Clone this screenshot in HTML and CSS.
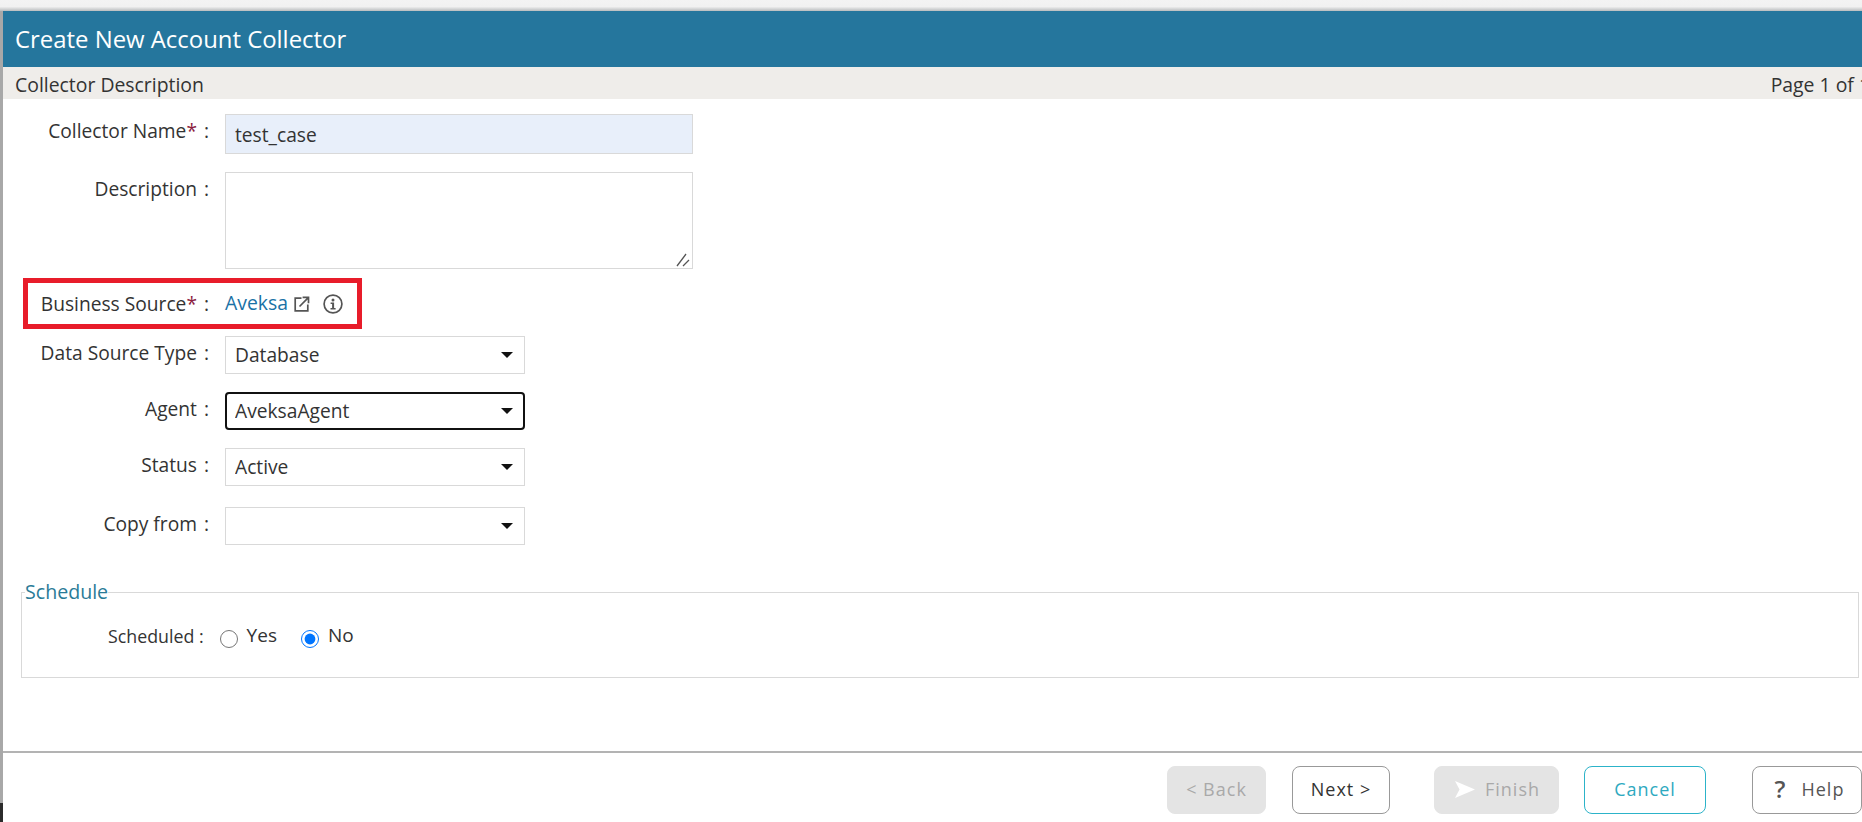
FILE: index.html
```html
<!DOCTYPE html>
<html lang="en">
<head>
<meta charset="utf-8">
<title>Create New Account Collector</title>
<link rel="stylesheet" href="styles.css">
</head>
<body>
<div class="page">
  <div class="top-strip"></div>
  <div class="window">
    <h1 class="title">Create New Account Collector</h1>
    <div class="subbar"><span>Collector Description</span><span>Page 1 of 1</span></div>
    <form class="form">
      <div class="row row-name">
        <label class="label">Collector Name<em>*</em><span class="colon">:</span></label>
        <input class="field text-field filled" type="text" value="test_case">
      </div>
      <div class="row row-desc">
        <label class="label">Description<span class="colon">:</span></label>
        <div class="area-wrap">
          <textarea class="field area"></textarea>
          <svg class="grip" viewBox="0 0 14 14" fill="none" stroke="#555" stroke-width="1.300"><path d="M1 13L10 1M7 13L13 7"/></svg>
        </div>
      </div>
      <div class="row highlight">
        <label class="label">Business Source<em>*</em><span class="colon">:</span></label>
        <div class="source">
          <a class="link">Aveksa</a>
          <svg class="ext" viewBox="0 0 16 16" fill="none" stroke="#555" stroke-width="1.700"><path d="M7.500 2.200H1.200v12.600h12.600V8.500"/><path d="M5.500 10.500L14.300 1.700M8.600 1.400h5.900v5.900"/></svg>
          <svg class="info" viewBox="0 0 20 20" fill="none"><circle cx="10" cy="10" r="8.900" stroke="#555" stroke-width="1.700"/><circle cx="10" cy="5.900" r="1.500" fill="#555"/><path d="M7.600 8.600H11.100v5.400h1.500v1.500H7.500V14h1.600v-3.900H7.600z" fill="#555"/></svg>
        </div>
      </div>
      <div class="row row-select">
        <label class="label">Data Source Type<span class="colon">:</span></label>
        <div class="select-wrap"><select class="field select"><option>Database</option></select></div>
      </div>
      <div class="row row-select">
        <label class="label">Agent<span class="colon">:</span></label>
        <div class="select-wrap"><select class="field select focused"><option>AveksaAgent</option></select></div>
      </div>
      <div class="row row-select">
        <label class="label">Status<span class="colon">:</span></label>
        <div class="select-wrap"><select class="field select"><option>Active</option></select></div>
      </div>
      <div class="row row-copy">
        <label class="label">Copy from<span class="colon">:</span></label>
        <div class="select-wrap"><select class="field select"><option></option></select></div>
      </div>
      <fieldset class="schedule">
        <legend>Schedule</legend>
        <div class="sched-row">
          <span class="sched-label">Scheduled :</span>
          <label class="radio"><input type="radio" name="sched"><span>Yes</span></label>
          <label class="radio"><input type="radio" name="sched" checked><span>No</span></label>
        </div>
      </fieldset>
    </form>
    <div class="footer">
      <button type="button" class="btn disabled back">&lt; Back</button>
      <button type="button" class="btn next">Next &gt;</button>
      <button type="button" class="btn disabled finish"><svg class="plane" viewBox="0 0 20 17"><path d="M0 0L20 8.500L0 17L4.500 8.500z" fill="#fff"/></svg>Finish</button>
      <button type="button" class="btn cancel">Cancel</button>
      <button type="button" class="btn help"><span class="q">?</span>Help</button>
    </div>
  </div>
  <div class="corner"></div>
</div>
</body>
</html>
```

FILE: styles.css
```css
* { box-sizing: border-box; }
html, body { margin: 0; height: 100%; overflow: hidden; }
body { font-family: "Open Sans", "Liberation Sans", sans-serif; font-size: 19.2px; color: #333; background: #fff; }
.page { position: relative; width: 1862px; height: 822px; display: flex; flex-direction: column; overflow: hidden; }
.top-strip { height: 11px; background: linear-gradient(#f3f3f3 0, #f1f1f1 60%, #b9bcbe 100%); flex: none; }
.window { flex: 1; display: flex; flex-direction: column; border-left: 3px solid #a8a8a8; min-height: 0; }
.title { margin: 0; height: 56px; flex: none; padding: 0 0 0 12px; background: #25769d; color: #fff; font-size: 23.900px; font-weight: 400; line-height: 55px; }
.subbar { height: 32px; flex: none; margin-right: -8px; padding: 2px 0 0 12px; background: #efedea; display: flex; justify-content: space-between; align-items: center; color: #333; font-size: 19.400px; }
.form { flex: 1; padding-top: 15px; display: flex; flex-direction: column; min-height: 0; }
.row { display: grid; grid-template-columns: 206px 468px; column-gap: 16px; align-items: start; }
.label { text-align: right; line-height: 24px; padding-top: 5px; color: #333; white-space: nowrap; }
.label em { font-style: normal; color: #8c1d3f; }
.colon { margin-left: 7px; }
.field { font: inherit; color: #333; border: 1px solid #d9d9d9; background: #fff; border-radius: 0; display: block; margin: 0; outline: none; }
.text-field { width: 468px; height: 40px; padding: 0 9px; }
.filled { background: #e8effa; }
.row-desc { margin-top: 18px; }
.area-wrap { position: relative; width: 468px; height: 97px; }
.area { width: 468px; height: 97px; resize: none; }
.grip { position: absolute; right: 3px; bottom: 2px; width: 14px; height: 14px; }
.highlight { margin: 9px 0 7px 20px; width: 339px; height: 51px; border: 5px solid #e81c2a; grid-template-columns: 181px auto; }
.highlight .label { padding-top: 9px; }
.source { display: flex; align-items: center; height: 36px; margin-top: 1px; }
.link { color: #1a72a6; font-size: 19.400px; }
.ext { width: 16px; height: 16px; margin: 4px 0 0 6px; }
.info { width: 20px; height: 20px; margin: 4px 0 0 13px; }
.row-select { margin-bottom: 18px; }
.row-copy { margin-top: 3px; }
.select-wrap { position: relative; width: 300px; height: 38px; }
.select-wrap::after { content: ""; position: absolute; right: 12px; top: 16px; border: 6px solid transparent; border-bottom: 0; border-top: 6.500px solid #111; pointer-events: none; }
.select { width: 300px; height: 38px; padding: 0 9px 2px; appearance: none; -webkit-appearance: none; }
.focused { border: 2px solid #111; border-radius: 4px; padding: 0 8px 2px; }
.schedule { margin: 35px 0 0 18px; width: 1838px; height: 98px; border: 1px solid #d9d9d9; padding: 0; min-width: 0; }
.schedule legend { padding: 0; margin-left: 3px; color: #2a7b97; line-height: 24px; font-size: 19.600px; }
.sched-row { display: flex; align-items: center; margin-top: 18px; height: 28px; padding-left: 86px; }
.sched-label { font-size: 17.800px; margin-right: 16px; }
.radio { display: flex; align-items: center; margin-right: 24px; }
.radio input { width: 18px; height: 18px; margin: 5px 9px 0 0; }
.radio span { font-size: 19px; margin-top: -2px; }
.footer { height: 71px; flex: none; border-top: 2px solid #b3b3b3; padding: 13px 0 0; display: flex; justify-content: flex-end; align-items: flex-start; }
.btn { font: inherit; font-size: 18px; height: 48px; border-radius: 8px; background: #fff; border: 1px solid #999; color: #333; padding: 0 0 2px; letter-spacing: 1px; display: flex; align-items: center; justify-content: center; }
.disabled { background: #e4e4e4; border-color: #e4e4e4; color: #a9a9a9; }
.back { width: 99px; margin-right: 26px; }
.next { width: 98px; margin-right: 44px; }
.finish { width: 125px; margin-right: 25px; padding-left: 2px; }
.plane { width: 20px; height: 17px; margin-right: 10px; }
.cancel { width: 122px; margin-right: 46px; border-color: #2cb3c9; color: #2ea9c0; }
.help { width: 110px; color: #555; padding-left: 5px; }
.q { font-size: 24px; font-weight: 600; line-height: 24px; margin-right: 15px; }
.corner { position: absolute; left: 0; top: 803px; width: 3px; height: 19px; background: #2b2b2b; }
```
